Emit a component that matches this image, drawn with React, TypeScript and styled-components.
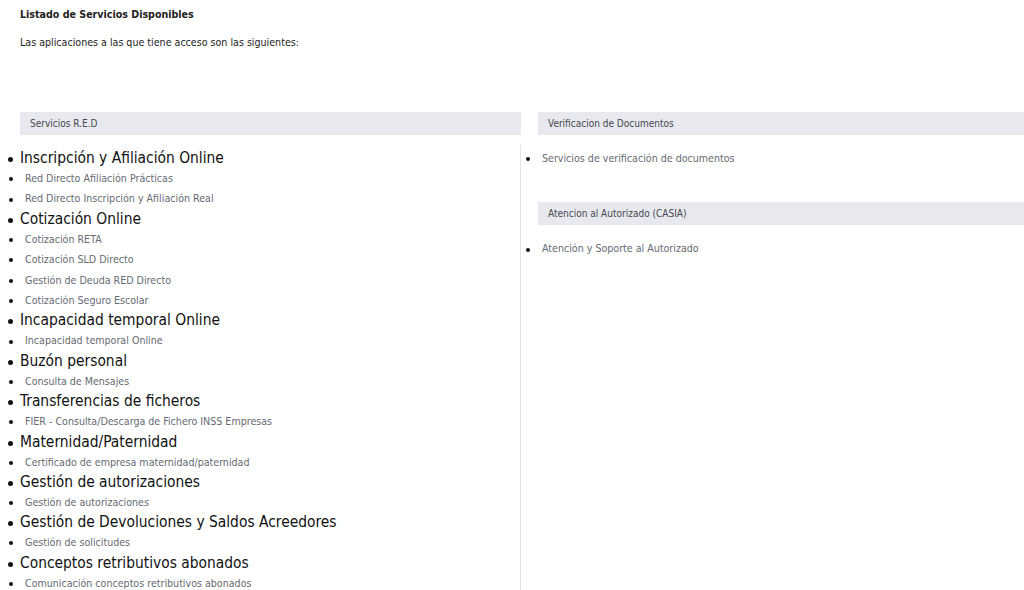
import React from "react";
import styled, { createGlobalStyle } from "styled-components";

const Global = createGlobalStyle`
  html, body { margin: 0; padding: 0; background: #fff; }
  body { font-family: "DejaVu Sans Condensed", "DejaVu Sans", sans-serif; color: #222; }
  ul { margin: 0; padding: 0; list-style: none; }
`;

const Page = styled.div`
  width: 1024px;
  height: 590px;
  overflow: hidden;
`;

const Intro = styled.div`
  padding: 7px 0 0 20px;
  height: 105px;
  box-sizing: border-box;
`;

const Title = styled.h1`
  margin: 0;
  font-size: 10.6px;
  font-weight: bold;
  line-height: 14px;
  color: #222;
`;

const Subtitle = styled.p`
  margin: 14px 0 0;
  font-size: 10.6px;
  line-height: 14px;
  color: #222;
`;

const Columns = styled.div`
  display: grid;
  grid-template-columns: 521px 1fr;
  padding-top: 7px;
`;

const LeftCol = styled.section`
  display: flex;
  flex-direction: column;
`;

const RightCol = styled.section`
  display: flex;
  flex-direction: column;
  padding-left: 17px;
`;

const Bar = styled.div<{ $left?: number }>`
  height: 23px;
  background: #e8e9ee;
  margin-left: ${(p) => p.$left ?? 0}px;
  padding-left: 10px;
  font-size: 10px;
  line-height: 23px;
  color: #454850;
`;

const LeftList = styled.ul`
  margin-top: 10px !important;
  padding-top: 3px !important;
  border-right: 1px solid #e4e4e4;
`;

const RightList = styled.ul`
  margin-left: -17px !important;
  padding: 13px 0 12px !important;
`;

const Item = styled.li<{ $big?: boolean }>`
  position: relative;
  padding-left: ${(p) => (p.$big ? 20 : 25)}px;
  height: ${(p) => (p.$big ? 20 : 20.4)}px;
  line-height: ${(p) => (p.$big ? 20 : 21)}px;
  font-size: ${(p) => (p.$big ? 15.4 : 10.6)}px;
  color: ${(p) => (p.$big ? "#111" : "#666a72")};
  white-space: nowrap;
  &::before {
    content: "";
    position: absolute;
    left: ${(p) => (p.$big ? 8 : 9)}px;
    top: 50%;
    width: ${(p) => (p.$big ? 5 : 4)}px;
    height: ${(p) => (p.$big ? 5 : 4)}px;
    margin-top: -1px;
    border-radius: 50%;
    background: #111;
  }
`;

const RightItem = styled(Item)`
  padding-left: 21px;
  &::before {
    left: 5px;
  }
`;

const Spacer = styled.div`
  height: 22px;
`;

type Group = { title: string; items: string[] };

const groups: Group[] = [
  { title: "Inscripción y Afiliación Online", items: ["Red Directo Afiliación Prácticas", "Red Directo Inscripción y Afiliación Real"] },
  { title: "Cotización Online", items: ["Cotización RETA", "Cotización SLD Directo", "Gestión de Deuda RED Directo", "Cotización Seguro Escolar"] },
  { title: "Incapacidad temporal Online", items: ["Incapacidad temporal Online"] },
  { title: "Buzón personal", items: ["Consulta de Mensajes"] },
  { title: "Transferencias de ficheros", items: ["FIER - Consulta/Descarga de Fichero INSS Empresas"] },
  { title: "Maternidad/Paternidad", items: ["Certificado de empresa maternidad/paternidad"] },
  { title: "Gestión de autorizaciones", items: ["Gestión de autorizaciones"] },
  { title: "Gestión de Devoluciones y Saldos Acreedores", items: ["Gestión de solicitudes"] },
  { title: "Conceptos retributivos abonados", items: ["Comunicación conceptos retributivos abonados"] },
];

export default function App() {
  return (
    <Page>
      <Global />
      <Intro>
        <Title>Listado de Servicios Disponibles</Title>
        <Subtitle>Las aplicaciones a las que tiene acceso son las siguientes:</Subtitle>
      </Intro>
      <Columns>
        <LeftCol>
          <Bar $left={20}>Servicios R.E.D</Bar>
          <LeftList>
            {groups.map((g) => (
              <React.Fragment key={g.title}>
                <Item $big>{g.title}</Item>
                {g.items.map((it) => (
                  <Item key={it}>{it}</Item>
                ))}
              </React.Fragment>
            ))}
          </LeftList>
        </LeftCol>
        <RightCol>
          <Bar>Verificacion de Documentos</Bar>
          <RightList>
            <RightItem>Servicios de verificación de documentos</RightItem>
          </RightList>
          <Spacer />
          <Bar>Atencion al Autorizado (CASIA)</Bar>
          <RightList>
            <RightItem>Atención y Soporte al Autorizado</RightItem>
          </RightList>
        </RightCol>
      </Columns>
    </Page>
  );
}
